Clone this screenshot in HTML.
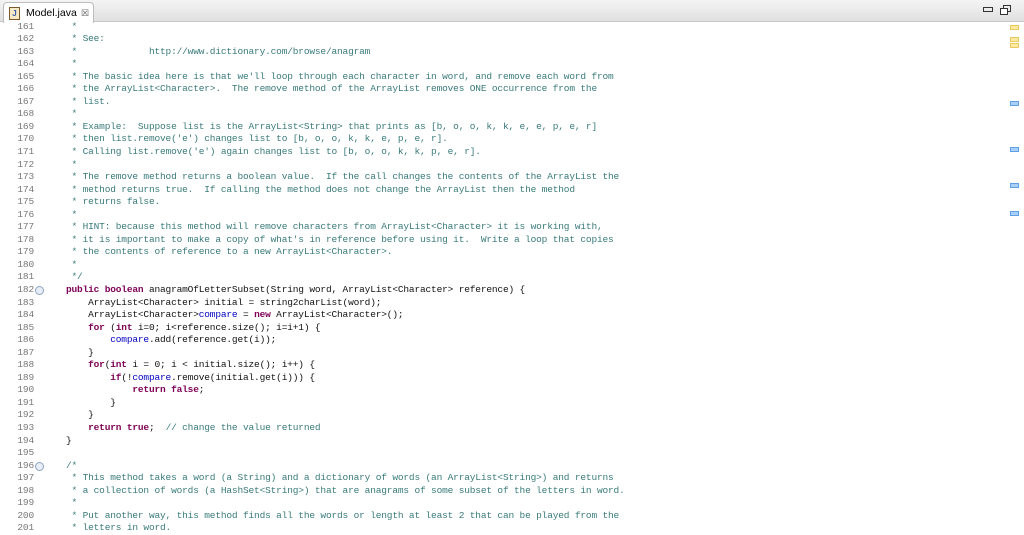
<!DOCTYPE html>
<html><head><meta charset="utf-8"><style>
body{margin:0;width:1024px;height:531px;overflow:hidden;background:#fff;font-family:"Liberation Sans",sans-serif;position:relative}
.tabbar{position:absolute;left:0;top:0;width:1024px;height:21px;background:linear-gradient(#f4f4f4,#e0e0e0);border-bottom:1px solid #c8c8c8}
.tab{position:absolute;left:3px;top:2px;width:89px;height:20px;background:#fff;border:1px solid #bdbdbd;border-bottom:none;border-radius:4px 4px 0 0;font-size:10.5px;line-height:20px}
.tab .ic{position:absolute;left:5px;top:4px;width:9px;height:11px;border:1px solid #7a5a2a;background:#f6e9c8;font:bold 8px "Liberation Sans";color:#3b5ea8;text-align:center;line-height:11px}
.tab .t{position:absolute;left:22px;top:0}
.tab .x{position:absolute;left:77px;top:0;font-size:9px;color:#555}
.code{position:absolute;left:0;top:20.5px;font-family:"Liberation Mono",monospace;font-size:9.5px;letter-spacing:-0.17px;line-height:12.55px;white-space:pre;color:#111}
.c{color:#3a7a7a}.k{color:#7f0055;font-weight:bold}.f{color:#0000c0}
.m{position:absolute;left:1010px;width:7px;height:3px;border:1px solid}
.y{background:#fde9a0;border-color:#e9c860}.b{background:#a9d0f7;border-color:#5fa0e6}
.fold{position:absolute;left:35px;width:7px;height:7px;border:1px solid #8da3c1;border-radius:50%;background:#e8eef6}
</style></head><body>
<div class="tabbar"><div class="tab"><div class="ic">J</div><span class="t">Model.java</span><span class="x">☒</span></div>
<div style="position:absolute;left:983px;top:7px;width:8px;height:3px;border:1px solid #333"></div>
<div style="position:absolute;left:1003px;top:5px;width:6px;height:5px;border:1px solid #333"></div>
<div style="position:absolute;left:1000px;top:8px;width:6px;height:5px;border:1px solid #333;background:#fff"></div>
</div>
<div class="code" style="left:0;width:34px;text-align:right;color:#777">161
162
163
164
165
166
167
168
169
170
171
172
173
174
175
176
177
178
179
180
181
182
183
184
185
186
187
188
189
190
191
192
193
194
195
196
197
198
199
200
201</div>
<div class="fold" style="top:286px"></div>
<div class="fold" style="top:462px"></div>
<div class="code" style="left:66px"><span class="c"> *
 * See:
 *             http://www.dictionary.com/browse/anagram
 *
 * The basic idea here is that we'll loop through each character in word, and remove each word from
 * the ArrayList&lt;Character&gt;.  The remove method of the ArrayList removes ONE occurrence from the
 * list.
 *
 * Example:  Suppose list is the ArrayList&lt;String&gt; that prints as [b, o, o, k, k, e, e, p, e, r]
 * then list.remove('e') changes list to [b, o, o, k, k, e, p, e, r].
 * Calling list.remove('e') again changes list to [b, o, o, k, k, p, e, r].
 *
 * The remove method returns a boolean value.  If the call changes the contents of the ArrayList the
 * method returns true.  If calling the method does not change the ArrayList then the method
 * returns false.
 *
 * HINT: because this method will remove characters from ArrayList&lt;Character&gt; it is working with,
 * it is important to make a copy of what's in reference before using it.  Write a loop that copies
 * the contents of reference to a new ArrayList&lt;Character&gt;.
 *
 */</span>
<span class="k">public boolean</span> anagramOfLetterSubset(String word, ArrayList&lt;Character&gt; reference) {
    ArrayList&lt;Character&gt; initial = string2charList(word);
    ArrayList&lt;Character&gt;<span class="f">compare</span> = <span class="k">new</span> ArrayList&lt;Character&gt;();
    <span class="k">for</span> (<span class="k">int</span> i=0; i&lt;reference.size(); i=i+1) {
        <span class="f">compare</span>.add(reference.get(i));
    }
    <span class="k">for</span>(<span class="k">int</span> i = 0; i &lt; initial.size(); i++) {
        <span class="k">if</span>(!<span class="f">compare</span>.remove(initial.get(i))) {
            <span class="k">return false</span>;
        }
    }
    <span class="k">return true</span>;  <span class="c">// change the value returned</span>
}

<span class="c">/*
 * This method takes a word (a String) and a dictionary of words (an ArrayList&lt;String&gt;) and returns
 * a collection of words (a HashSet&lt;String&gt;) that are anagrams of some subset of the letters in word.
 *
 * Put another way, this method finds all the words or length at least 2 that can be played from the
 * letters in word.</span></div>
<div class="m y" style="top:25px"></div>
<div class="m y" style="top:37px"></div>
<div class="m y" style="top:43px"></div>
<div class="m b" style="top:101px"></div>
<div class="m b" style="top:147px"></div>
<div class="m b" style="top:183px"></div>
<div class="m b" style="top:211px"></div>
</body></html>
